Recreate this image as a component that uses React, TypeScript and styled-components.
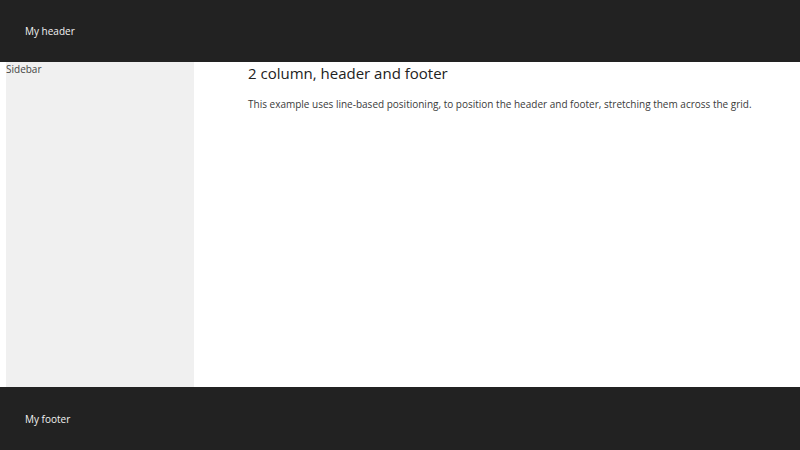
import React from "react";
import styled, { createGlobalStyle } from "styled-components";

const GlobalStyle = createGlobalStyle`
  html, body {
    margin: 0;
    padding: 0;
    background: #fff;
  }
  body {
    font-family: "Open Sans", "Liberation Sans", sans-serif;
    color: #333;
  }
`;

const Layout = styled.div`
  display: grid;
  grid-template-columns: 194px 1fr;
  grid-template-rows: 62px 1fr 63px;
  height: 450px;
`;

const Bar = styled.div`
  grid-column: 1 / 3;
  background: #222;
  color: #f2f2f2;
  font-size: 10px;
  display: flex;
  align-items: center;
  padding-left: 25px;
`;

const Sidebar = styled.aside`
  margin-left: 6px;
  background: #f0f0f0;
  font-size: 10px;
  line-height: 14px;
  color: #444;
`;

const Content = styled.main`
  padding: 1px 40px 0 54px;
`;

const Title = styled.h1`
  margin: 0;
  font-size: 15px;
  font-weight: 400;
  line-height: 20px;
  color: #222;
`;

const Text = styled.p`
  margin: 13px 0 0;
  font-size: 10px;
  line-height: 16px;
  color: #3a3a3a;
`;

const App: React.FC = () => {
  return (
    <>
      <GlobalStyle />
      <Layout>
        <Bar>My header</Bar>
        <Sidebar>Sidebar</Sidebar>
        <Content>
          <Title>2 column, header and footer</Title>
          <Text>
            This example uses line-based positioning, to position the header and
            footer, stretching them across the grid.
          </Text>
        </Content>
        <Bar>My footer</Bar>
      </Layout>
    </>
  );
};

export default App;
